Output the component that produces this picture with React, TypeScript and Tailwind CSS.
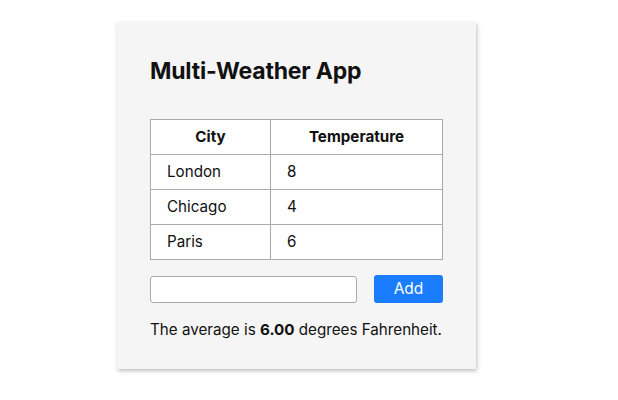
import { useState } from "react";

type Row = { city: string; temp: number };

const initialRows: Row[] = [
  { city: "London", temp: 8 },
  { city: "Chicago", temp: 4 },
  { city: "Paris", temp: 6 },
];

export default function App() {
  const [rows] = useState<Row[]>(initialRows);
  const [value, setValue] = useState("");

  const average = rows.reduce((sum, r) => sum + r.temp, 0) / rows.length;

  return (
    <div className="w-[618px] h-[400px] bg-white pt-[22px] pl-[117px] font-['Inter',sans-serif] text-[#111]">
      <div className="w-[359px] h-[347px] bg-[#f5f5f5] shadow-[1px_2px_4px_rgba(0,0,0,0.25)] px-[33px] pt-[34px]">
        <h1 className="text-[23px] leading-[30px] font-bold tracking-[-0.2px]">
          Multi-Weather App
        </h1>

        <table className="mt-[33px] w-[293px] border-collapse bg-white text-[15.2px]">
          <thead>
            <tr className="h-[35px]">
              <th className="w-[120px] border border-[#aaa] font-bold text-center">
                City
              </th>
              <th className="border border-[#aaa] font-bold text-center">
                Temperature
              </th>
            </tr>
          </thead>
          <tbody>
            {rows.map((r) => (
              <tr key={r.city} className="h-[35px]">
                <td className="border border-[#aaa] pl-[16px]">{r.city}</td>
                <td className="border border-[#aaa] pl-[16px]">{r.temp}</td>
              </tr>
            ))}
          </tbody>
        </table>

        <div className="mt-[15px] flex items-center justify-between">
          <input
            value={value}
            onChange={(e) => setValue(e.target.value)}
            className="w-[207px] h-[27px] bg-white border border-[#aaa] rounded-[3px] px-2 text-[15px] outline-none"
          />
          <button className="w-[69px] h-[28px] bg-[#1a7cff] rounded-[3px] text-white text-[15.5px]">
            Add
          </button>
        </div>

        <p className="mt-[17px] text-[15.2px] leading-[20px]">
          The average is <b className="font-bold">{average.toFixed(2)}</b>{" "}
          degrees Fahrenheit.
        </p>
      </div>
    </div>
  );
}
